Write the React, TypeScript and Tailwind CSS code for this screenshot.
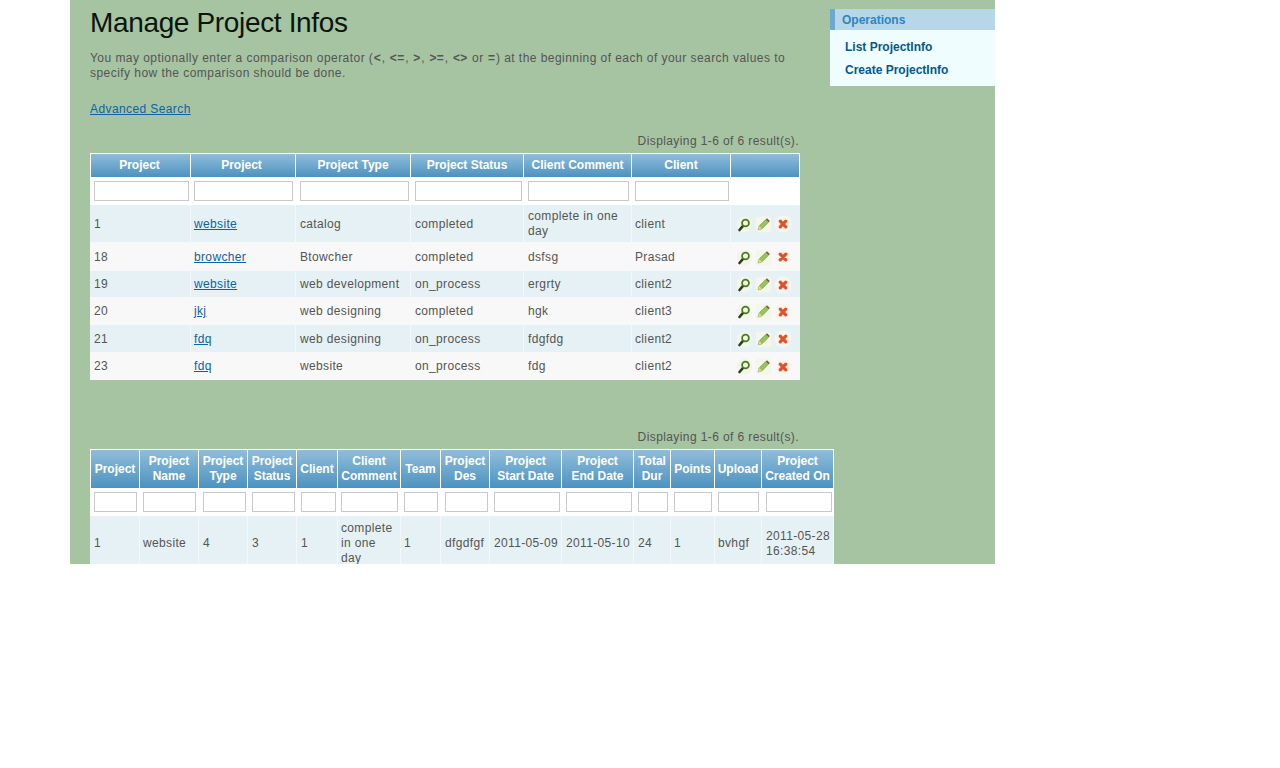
const font = "[font-family:'Liberation_Sans',Arial,sans-serif]";

const Icons = () => (
  <div className="flex items-center gap-[2px] pl-[5px] mt-[1px]">
    <svg width="17" height="17" viewBox="0 0 17 17">
      <circle cx="8.5" cy="8.5" r="8" fill="#f2f6ea" />
      <path d="M3.5 14 L6.8 10.2" stroke="#2f3d1c" strokeWidth="2.6" strokeLinecap="round" />
      <circle cx="9.5" cy="7" r="3.4" fill="#f4f8e0" stroke="#4c7a22" strokeWidth="1.8" />
    </svg>
    <svg width="17" height="17" viewBox="0 0 17 17">
      <rect x="0.5" y="0.5" width="16" height="16" rx="4" fill="#f4f6ea" />
      <path d="M3 14 L4.2 10 L10.5 3.8 L13.2 6.5 L7 12.8 Z" fill="#9cc25a" stroke="#6f9a38" strokeWidth="0.7" />
      <path d="M10.8 3.4 L12 2.2 L14.8 5 L13.6 6.2 Z" fill="#7a5a48" />
      <path d="M3 14 L4.2 10 L6.8 12.8 Z" fill="#e9d6a8" />
    </svg>
    <svg width="18" height="18" viewBox="0 0 18 18">
      <circle cx="9" cy="9" r="8.5" fill="#fbf3ee" />
      <path d="M6.2 6.2 L11.8 11.8 M11.8 6.2 L6.2 11.8" stroke="#e2502a" strokeWidth="3.2" strokeLinecap="round" />
    </svg>
  </div>
);

const Link = ({ t }: { t: string }) => <a href="#" className="text-[#0b63a8] underline">{t}</a>;

const th = "border-t border-r border-white bg-gradient-to-b from-[#8fbddb] to-[#4d92bf] text-white font-bold text-[12px] leading-[15px] text-center p-0";
const td = "border-r border-r-[#f4f8fa] pt-[1px] pb-0 pr-[2px] text-[12px] leading-[15px] text-[#555] tracking-[0.35px] align-middle";

const rows1 = [
  ["1", "website", "catalog", "completed", "complete in one day", "client", "h-[37px]"],
  ["18", "browcher", "Btowcher", "completed", "dsfsg", "Prasad", "h-[29px]"],
  ["19", "website", "web development", "on_process", "ergrty", "client2", "h-[26px]"],
  ["20", "jkj", "web designing", "completed", "hgk", "client3", "h-[28px]"],
  ["21", "fdq", "web designing", "on_process", "fdgfdg", "client2", "h-[27px]"],
  ["23", "fdq", "website", "on_process", "fdg", "client2", "h-[28px]"],
];
const widths1 = [101, 105, 115, 113, 108, 99, 69];
const pads1 = ["pl-[4px]", "pl-[3px]", "pl-[4px]", "pl-[4px]", "pl-[4px]", "pl-[3px]", "p-0"];
const inputs1 = [95, 99, 109, 107, 101, 94];
const heads1 = ["Project", "Project", "Project Type", "Project Status", "Client Comment", "Client", ""];
const headPads1 = ["pr-[2px]", "pr-[3px]", "", "", "", "", ""];

const heads2: [string, string?][] = [["Project"], ["Project", "Name"], ["Project", "Type"], ["Project", "Status"], ["Client"], ["Client", "Comment"], ["Team"], ["Project", "Des"], ["Project", "Start Date"], ["Project", "End Date"], ["Total", "Dur"], ["Points"], ["Upload"], ["Project", "Created On"]];
const widths2 = [50, 59, 49, 49, 41, 63, 40, 49, 72, 72, 37, 44, 47, 72];
const pads2 = ["pl-[4px]", "pl-[3px]", "pl-[4px]", "pl-[4px]", "pl-[4px]", "pl-[3px]", "pl-[3px]", "pl-[4px]", "pl-[4px]", "pl-[4px]", "pl-[4px]", "pl-[3px]", "pl-[3px]", "pl-[4px]"];
const inputs2 = [43, 53, 43, 43, 35, 57, 34, 43, 66, 66, 30, 38, 41, 66];
const row2 = ["1", "website", "4", "3", "1", "complete in one day", "1", "dfgdfgf", "2011-05-09", "2011-05-10", "24", "1", "bvhgf", "2011-05-28 16:38:54"];

const Filter = ({ w }: { w: number }) => (
  <input style={{ width: w }} className="block h-[20px] border border-[#c9c9c9] bg-white" />
);

const Pager = ({ className }: { className: string }) => (
  <div className={`text-right text-[12px] leading-[15px] text-[#555] tracking-[0.4px] pr-px ${className}`}>Displaying 1-6 of 6 result(s).</div>
);

const Op = ({ t }: { t: string }) => <b className="mx-[0.5px]">{t}</b>;

export default function App() {
  return (
    <div className={`${font} min-h-[768px] bg-white`}>
      <div className="ml-[70px] w-[925px] h-[564px] bg-[#a6c3a2] overflow-hidden flex">
        <div className="w-[760px] shrink-0 pl-[20px]">
          <h1 className="mt-[7px] text-[28px] leading-[32px] font-normal text-[#0c140c] tracking-[-0.35px]">Manage Project Infos</h1>
          <p className="mt-[12px] w-[710px] text-[12px] leading-[15px] text-[#555] tracking-[0.45px]">
            You may optionally enter a comparison operator (<Op t="<" />, <Op t="<=" />, <Op t=">" />, <Op t=">=" />, <Op t="<>" /> or <Op t="=" />) at the beginning of each of your search values to specify how the comparison should be done.
          </p>
          <p className="mt-[21px] text-[12px] leading-[15px] tracking-[0.4px]"><Link t="Advanced Search" /></p>
          <Pager className="mt-[17px] w-[710px]" />
          <table className="mt-[4px] w-[710px] table-fixed border-separate border-spacing-0">
            <colgroup>{widths1.map((w, i) => <col key={i} style={{ width: w }} />)}</colgroup>
            <thead>
              <tr className="h-[24px]">{heads1.map((h, i) => <th key={i} className={`${th} ${headPads1[i]} ${i === 0 ? "border-l" : ""}`}>{h}</th>)}</tr>
              <tr className="h-[28px] bg-white">
                {widths1.map((w, i) => <td key={i} className={pads1[i] + " py-0"}>{i < 6 ? <Filter w={inputs1[i]} /> : null}</td>)}
              </tr>
            </thead>
            <tbody>
              {rows1.map((r, i) => (
                <tr key={i} className={`${r[6]} ${i % 2 ? "bg-[#f8f8f8]" : "bg-[#e5f1f4]"}`}>
                  <td className={`${td} ${pads1[0]}`}>{r[0]}</td>
                  <td className={`${td} ${pads1[1]}`}><Link t={r[1]} /></td>
                  <td className={`${td} ${pads1[2]}`}>{r[2]}</td>
                  <td className={`${td} ${pads1[3]}`}>{r[3]}</td>
                  <td className={`${td} ${pads1[4]}`}>{r[4]}</td>
                  <td className={`${td} ${pads1[5]}`}>{r[5]}</td>
                  <td className="p-0 align-middle"><Icons /></td>
                </tr>
              ))}
            </tbody>
          </table>
          <Pager className="mt-[50px] w-[710px]" />
          <table className="mt-[4px] w-[744px] table-fixed border-separate border-spacing-0">
            <colgroup>{widths2.map((w, i) => <col key={i} style={{ width: w }} />)}</colgroup>
            <thead>
              <tr className="h-[39px]">
                {heads2.map((h, i) => (
                  <th key={i} className={`${th} ${i === 0 ? "border-l" : ""}`}>
                    {h[0]}{h[1] ? <><br />{h[1]}</> : null}
                  </th>
                ))}
              </tr>
              <tr className="h-[28px] bg-white">
                {widths2.map((w, i) => <td key={i} className={pads2[i] + " py-0"}><Filter w={inputs2[i]} /></td>)}
              </tr>
            </thead>
            <tbody>
              <tr className="bg-[#e5f1f4]">
                {row2.map((c, i) => <td key={i} className={`${td} ${pads2[i]} !py-[5px]`}>{c}</td>)}
              </tr>
            </tbody>
          </table>
        </div>
        <div className="w-[165px] shrink-0 mt-[9px] self-start">
          <div className="h-[21px] bg-[#b7d6e7] border-l-[5px] border-l-[#6ea7cf] pl-[7px] text-[12px] leading-[22px] font-bold text-[#2a86c4]">Operations</div>
          <ul className="bg-[#effdff] h-[56px] pt-[8px] pl-[15px] text-[12px] font-bold text-[#06578c]">
            <li className="h-[23px] leading-[18px]">List ProjectInfo</li>
            <li className="leading-[18px]">Create ProjectInfo</li>
          </ul>
        </div>
      </div>
    </div>
  );
}
